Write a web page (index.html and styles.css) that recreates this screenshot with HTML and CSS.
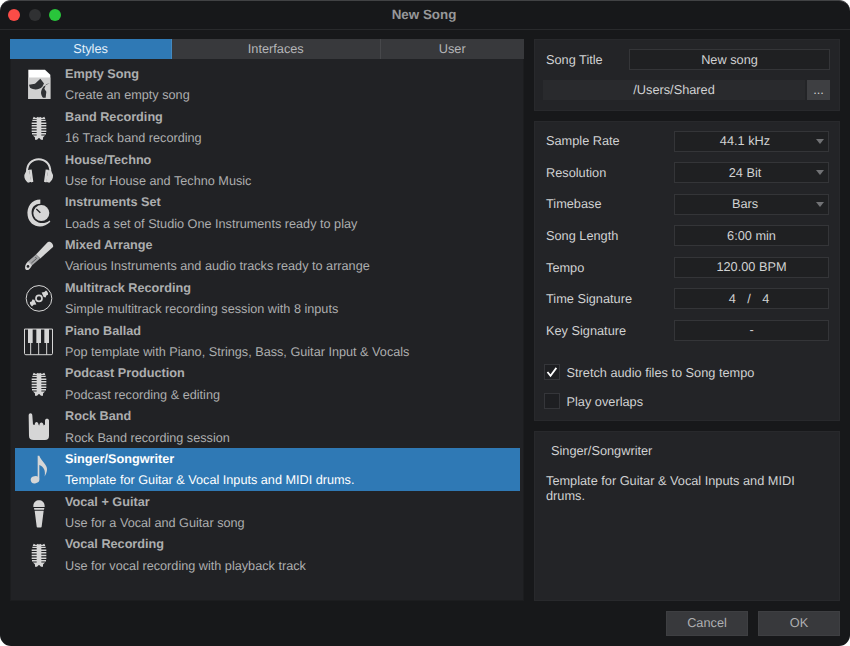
FILE: index.html
```html
<!DOCTYPE html>
<html lang="en">
<head>
<meta charset="utf-8">
<title>New Song</title>
<link rel="stylesheet" href="styles.css">
</head>
<body>
<svg class="defs" aria-hidden="true">
  <symbol id="mic" viewBox="0 0 150 128">
    <path d="M59 32l7 4 6-4 3 3 3-3 6 4 7-4 3 7H56z"/>
    <path d="M68 36h14v54H68z"/>
    <path d="M55 41h40v4H55zM53 49h44v4.500H53zM53 57h44v4.500H53zM53 65h44v4.500H53zM53 73h44v4.500H53zM54 81h42v4.500H54z"/>
    <path d="M57 88h36l-6 6v7h-6l-6-6-6 6h-6v-7z"/>
  </symbol>
</svg>
<main class="window">
  <header class="titlebar">
    <div class="lights"><i class="red"></i><i class="gray"></i><i class="green"></i></div>
    <h1>New Song</h1>
  </header>
  <div class="content">
    <section class="browser">
      <nav class="tabs"><span class="tab active">Styles</span><span class="tab">Interfaces</span><span class="tab">User</span></nav>
      <ul class="templates">
        <li><svg viewBox="0 0 150 128"><path d="M43 20h50l16 15v73H43z" fill="#fff"/><path d="M43 43h66v65H43z" fill="#d0d0d0"/><path d="M45 65l18-3 16-15 11 14-5 10c-10 9-24 11-37 3zM108 59l-12 5-5 13 6 9-2 18h-8c-8-11-8-22 2-34z" fill="#303235"/></svg><div><b>Empty Song</b><p>Create an empty song</p></div></li>
        <li><svg><use href="#mic"/></svg><div><b>Band Recording</b><p>16 Track band recording</p></div></li>
        <li><svg viewBox="0 0 150 128"><path d="M39 70c-3-53 73-53 70 0" fill="none" stroke="#d6d6d6" stroke-width="6"/><path d="M37 65l8-3 7 36-10 3c-8-6-12-14-11-23zM111 65l-8-3-7 36 10 3c8-6 12-14 11-23z"/><path d="M45 62l8-1 5 37-7 2zM103 62l-8-1-5 37 7 2z"/></svg><div><b>House/Techno</b><p>Use for House and Techno Music</p></div></li>
        <li><svg viewBox="0 0 150 128"><path d="M79 25v13c-18 1-28 12-26 30 3 25 32 37 54 20l2 4c-24 25-63 15-68-18-4-27 12-49 38-49z"/><circle cx="82" cy="66" r="24"/><path d="M67 54l12 11" stroke="#212225" stroke-width="4"/></svg><div><b>Instruments Set</b><p>Loads a set of Studio One Instruments ready to play</p></div></li>
        <li><svg viewBox="0 0 150 128"><path d="M66 61l34-36c7-6 20 5 17 14L79 73z"/><path d="M66 61l12 12-25 22-12-12z" fill="#a4a5a7"/><path d="M64 69l4 4-16 14" fill="none" stroke="#5b5c5e" stroke-width="3"/><path d="M42 82l12 12c-7 13-14 17-19 12-4-6-1-17 7-24z"/><circle cx="42" cy="97" r="4" fill="#212225"/></svg><div><b>Mixed Arrange</b><p>Various Instruments and audio tracks ready to arrange</p></div></li>
        <li><svg viewBox="0 0 150 128"><circle cx="75" cy="64" r="38.5" fill="none" stroke="#d6d6d6" stroke-width="3"/><circle cx="75" cy="64" r="9" fill="none" stroke="#d6d6d6" stroke-width="5"/><path d="M83 46l8-1 5-5c5 4 7 8 6 13l-5 2-2 6-6-1zM67 82l-8 1-5 5c-5-4-7-8-6-13l5-2 2-6 6 1z"/></svg><div><b>Multitrack Recording</b><p>Simple multitrack recording session with 8 inputs</p></div></li>
        <li><svg viewBox="0 0 150 128"><path d="M31.500 27h84v73q0 4-4 4H35.500q-4 0-4-4zM50 27v77M74 27v77M98 27v77" fill="none" stroke="#d6d6d6" stroke-width="3"/><path d="M42 27h14v42H42zM67 27h14v42H67zM91 27h14v42H91z"/></svg><div><b>Piano Ballad</b><p>Pop template with Piano, Strings, Bass, Guitar Input &amp; Vocals</p></div></li>
        <li><svg><use href="#mic"/></svg><div><b>Podcast Production</b><p>Podcast recording &amp; editing</p></div></li>
        <li><svg viewBox="0 0 150 128"><path d="M44 31c0-9 11-9 11 0l2 27 5 2c0-12 11-12 12 0l2 1c0-12 12-12 13 0l4-3V46c0-7 12-7 12 0v46q0 13-12 13H59q-14 0-14-13z"/></svg><div><b>Rock Band</b><p>Rock Band recording session</p></div></li>
        <li class="selected"><svg viewBox="0 0 150 128"><ellipse cx="63" cy="95" rx="13" ry="11" transform="rotate(-12 63 95)"/><path d="M71 23h5c4 15 25 26 23 43-1 7-3 13-7 19 3-17-2-28-16-34v43h-5z"/></svg><div><b>Singer/Songwriter</b><p>Template for Guitar &amp; Vocal Inputs and MIDI drums.</p></div></li>
        <li><svg viewBox="0 0 150 128"><path d="M58 45c0-23 34-23 34 0v3H58zM60 51h31l-1 5H61zM62 59h27l-6 47q0 3-3 3h-9q-3 0-3-3z"/></svg><div><b>Vocal + Guitar</b><p>Use for a Vocal and Guitar song</p></div></li>
        <li><svg><use href="#mic"/></svg><div><b>Vocal Recording</b><p>Use for vocal recording with playback track</p></div></li>
      </ul>
    </section>
    <aside class="side">
      <section class="panel location">
        <div class="title-row"><span>Song Title</span><span class="field">New song</span></div>
        <div class="path-row"><span class="path">/Users/Shared</span><span class="browse">...</span></div>
      </section>
      <section class="panel settings">
        <div class="setting"><span>Sample Rate</span><span class="field menu">44.1 kHz</span></div>
        <div class="setting"><span>Resolution</span><span class="field menu">24 Bit</span></div>
        <div class="setting"><span>Timebase</span><span class="field menu">Bars</span></div>
        <div class="setting"><span>Song Length</span><span class="field">6:00 min</span></div>
        <div class="setting"><span>Tempo</span><span class="field">120.00 BPM</span></div>
        <div class="setting"><span>Time Signature</span><span class="field signature"><span>4</span><span>/</span><span>4</span></span></div>
        <div class="setting"><span>Key Signature</span><span class="field">-</span></div>
        <div class="checks">
          <div class="check"><span class="box"><svg viewBox="0 0 16 16"><path d="M2.800 8l3.500 4.300L13 3.300" fill="none" stroke="#fff" stroke-width="2"/></svg></span><span>Stretch audio files to Song tempo</span></div>
          <div class="check"><span class="box"></span><span>Play overlaps</span></div>
        </div>
      </section>
      <section class="panel description">
        <h2>Singer/Songwriter</h2>
        <p>Template for Guitar &amp; Vocal Inputs and MIDI drums.</p>
      </section>
    </aside>
  </div>
  <footer><span class="button">Cancel</span><span class="button">OK</span></footer>
</main>
</body>
</html>
```
FILE: styles.css
```css
* { box-sizing: border-box; }
body { margin: 0; background: #fff; font: 12.750px/15px "Liberation Sans", Arial, sans-serif; color: #d1d2d3; text-rendering: geometricPrecision; }
h1, h2, p, ul { margin: 0; padding: 0; font-size: inherit; }
.defs { display: block; width: 0; height: 0; }
.window { width: 850px; height: 646px; border-radius: 11px; overflow: hidden; background: #17181a; border-top: 1px solid #414244; display: flex; flex-direction: column; }
.titlebar { height: 29px; flex: none; border-bottom: 1px solid #292a2c; display: grid; grid-template-columns: 100px 1fr 100px; align-items: center; padding-bottom: 1px; }
.lights { display: flex; gap: 8.500px; padding-left: 8px; }
.lights i { width: 12px; height: 12px; border-radius: 50%; }
.red { background: #fb4c47; }
.gray { background: #303133; }
.green { background: #29c53b; }
h1 { text-align: center; font-weight: bold; font-size: 13.400px; color: #969799; padding: 0 2px 1px 0; }
.content { display: flex; gap: 10px; padding: 9px 10px 0; height: 571px; }
.browser { width: 514px; height: 562px; background: #212225; border: 1px solid #1c1d1f; }
.tabs { display: grid; grid-template-columns: 162px 208.500px 1fr; margin: -1px -1px 0; height: 20px; background: #38393c; color: #b5b6b8; }
.tab { text-align: center; line-height: 19px; border-right: 1px solid #47484b; }
.tab:last-child { border-right: 0; }
.tab.active { background: #2f79b5; color: #e3f0fa; border-right-color: #4389c0; }
.templates { list-style: none; padding: 4px 3px 0 4px; font-size: 12.680px; }
.templates li { height: 42.780px; display: flex; color: #adaeaf; }
.templates svg { width: 50px; height: 42.780px; margin-left: -1px; flex: none; fill: #d6d6d6; }
.templates div { padding: 4px 0 0 1px; }
.templates b { display: block; height: 21.400px; }
.templates .selected { background: #2f79b5; color: #fff; }
.side { width: 306px; display: flex; flex-direction: column; gap: 10px; }
.panel { background: #232427; border: 1px solid #28292c; }
.location { height: 72px; padding: 9px 9px 0; }
.title-row { display: flex; justify-content: space-between; align-items: center; padding-left: 2px; }
.title-row > span { padding-bottom: 1px; }
.title-row .field { width: 201px; }
.field { height: 21px; border: 1px solid #343538; background: #1f2022; display: flex; align-items: center; justify-content: center; position: relative; }
.path-row { display: flex; gap: 2px; margin-top: 10px; margin-left: -1px; }
.path { flex: 1; height: 20px; background: #292a2d; text-align: center; line-height: 19px; }
.browse { width: 23px; background: #3e3f42; text-align: center; line-height: 20px; }
.settings { height: 300px; padding: 8.600px 10px 0 9px; }
.setting { height: 31.550px; display: flex; align-items: flex-start; justify-content: space-between; padding-left: 2px; }
.setting > span:first-child { padding-top: 2.800px; }
.setting .field { width: 155px; padding-bottom: 1px; }
.setting .menu { padding-right: 13px; }
.menu::after { content: ""; position: absolute; right: 4px; top: 7px; border: 4px solid transparent; border-top: 5px solid #717275; border-bottom: 0; }
.setting .signature { gap: 11.500px; padding-right: 5px; }
.checks { display: flex; flex-direction: column; gap: 13px; padding-top: 13px; }
.check { display: flex; align-items: center; gap: 6.500px; }
.box { width: 16px; height: 16px; border: 1px solid #35363a; background: #1e1f22; display: flex; }
.box svg { width: 14px; height: 14px; }
.description { height: 170px; padding: 11px; }
.description h2 { font-weight: normal; padding-left: 5px; margin-bottom: 15px; }
footer { display: flex; justify-content: flex-end; gap: 10px; padding: 10px 10px 0; }
.button { width: 82px; height: 25px; background: #38393c; border: 1px solid #3e3f42; text-align: center; line-height: 22px; color: #afb0b2; }
```
